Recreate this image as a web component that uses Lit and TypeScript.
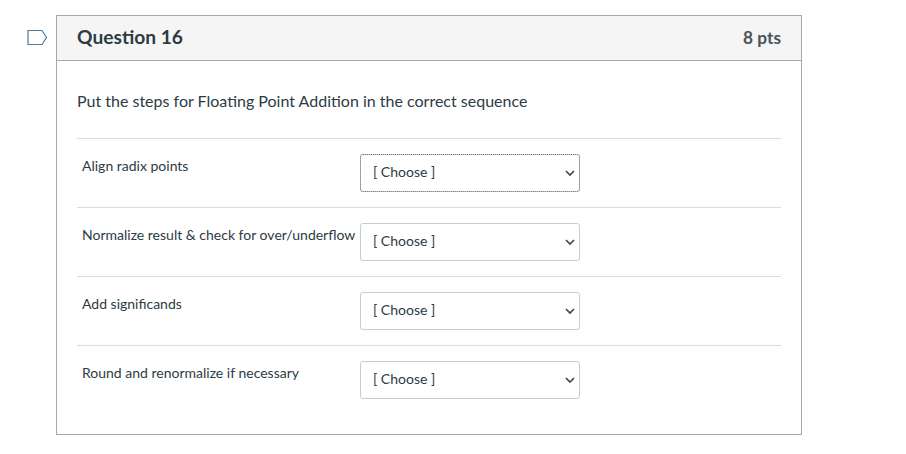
import { LitElement, html, css } from "lit";
import { customElement } from "lit/decorators.js";

const rows = [
  "Align radix points",
  "Normalize result & check for over/underflow",
  "Add significands",
  "Round and renormalize if necessary",
];

@customElement("app-root")
export class AppRoot extends LitElement {
  static styles = css`
    :host {
      display: block;
      width: 906px;
      height: 454px;
      box-sizing: border-box;
      padding: 15px 104px 0 27px;
      background: #fff;
      font-family: Lato, "Liberation Sans", sans-serif;
      color: #2d3b45;
    }
    .wrap { display: flex; align-items: flex-start; }
    .flag { width: 21px; height: 17px; margin: 14px 8px 0 0; flex: none; display: block; }
    .card { flex: 1; height: 420px; box-sizing: border-box; border: 1px solid #a8a8a8; }
    .head {
      height: 45px;
      box-sizing: border-box;
      background: #f5f5f5;
      border-bottom: 1px solid #a8a8a8;
      padding: 0 20px;
      display: flex;
      align-items: center;
      justify-content: space-between;
    }
    .title { margin: 0; font-size: 19.2px; font-weight: 700; line-height: 42px; height: 44px; }
    .pts { font-size: 17.3px; font-weight: 700; color: #4a5258; line-height: 44px; height: 44px; }
    .body { padding: 29px 20px 0; }
    .q { margin: 0; font-size: 16px; line-height: 22px; height: 48px; }
    .row {
      height: 69px;
      box-sizing: border-box;
      border-top: 1px solid #dcdcdc;
      display: flex;
      align-items: flex-start;
      padding: 15px 0 0 5px;
    }
    .label { width: 278px; flex: none; font-size: 14px; line-height: 24px; white-space: nowrap; }
    .field { position: relative; width: 220px; height: 38px; }
    select {
      display: block;
      appearance: none;
      width: 220px;
      height: 38px;
      box-sizing: border-box;
      padding: 0 8px 4px 12px;
      background: #fff;
      border: 1px solid #c7cdd1;
      border-radius: 3px;
      color: #2d3b45;
      font-family: inherit;
      font-size: 14px;
    }
    select.focused { outline: 1px dotted #777; outline-offset: -1px; }
    .chev { position: absolute; left: 205px; top: 15px; width: 10px; height: 8px; pointer-events: none; }
  `;

  render() {
    return html`
      <div class="wrap">
        <svg class="flag" viewBox="0 0 21 17" aria-hidden="true">
          <path d="M1 1.5H15L19.5 8.5L15 15.5H1Z" fill="#fff" stroke="#4f7b9b" stroke-width="1.2" />
        </svg>
        <section class="card">
          <header class="head">
            <h2 class="title">Question 16</h2>
            <span class="pts">8 pts</span>
          </header>
          <div class="body">
            <p class="q">Put the steps for Floating Point Addition in the correct sequence</p>
            ${rows.map(
              (r, i) => html`
                <div class="row">
                  <div class="label">${r}</div>
                  <div class="field">
                    <select class=${i === 0 ? "focused" : ""}><option>[ Choose ]</option></select>
                    <svg class="chev" viewBox="0 0 10 8" aria-hidden="true">
                      <path d="M1 2L5 6L9 2" fill="none" stroke="#3a4a55" stroke-width="1.7" />
                    </svg>
                  </div>
                </div>
              `
            )}
          </div>
        </section>
      </div>
    `;
  }
}
